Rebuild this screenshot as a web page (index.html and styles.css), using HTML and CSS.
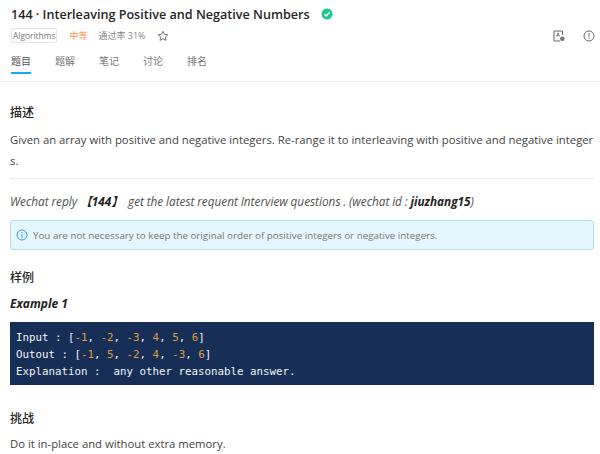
FILE: index.html
```html
<!DOCTYPE html>
<html lang="zh">
<head>
    <meta charset="UTF-8">
    <meta name="viewport" content="width=device-width, initial-scale=1.0">
    <title>144 · Interleaving Positive and Negative Numbers</title>
    <link rel="stylesheet" href="styles.css">
</head>
<body>

    <header class="head">
        <div class="title-row">
            <h1>144 · Interleaving Positive and Negative Numbers</h1>
            <svg class="done" width="12" height="12" viewBox="0 0 12 12">
                <circle cx="6" cy="6" r="5.5" fill="#1fc98b"/>
                <path d="M3.4 6.1 5.3 8 8.6 4.4" fill="none" stroke="#fff" stroke-width="1.4"/>
            </svg>
        </div>
        <div class="meta-row">
            <span class="tag">Algorithms</span>
            <span class="level">中等</span>
            <span class="rate">通过率 31%</span>
            <svg class="star" width="12" height="12" viewBox="0 0 12 12">
                <path d="M6 1.2 7.4 4.3 10.8 4.7 8.3 7 9 10.4 6 8.7 3 10.4 3.7 7 1.2 4.7 4.6 4.3Z" fill="none" stroke="#777" stroke-width="1"/>
            </svg>
            <div class="tools">
                <svg width="12" height="12" viewBox="0 0 12 12">
                    <path d="M9.5 5V1H1v10h6" fill="none" stroke="#666" stroke-width="1"/>
                    <path d="M3.4 6.5 5 2.8 6.6 6.5M4 5.4h2" fill="none" stroke="#666" stroke-width=".8"/>
                    <circle cx="9.3" cy="8.8" r="2.3" fill="#777"/>
                </svg>
                <svg width="12" height="12" viewBox="0 0 12 12">
                    <circle cx="6" cy="6" r="5" fill="none" stroke="#666" stroke-width="1"/>
                    <path d="M6 3v3.6M6 7.8v1.2" fill="none" stroke="#666" stroke-width="1"/>
                </svg>
            </div>
        </div>
        <nav class="tabs">
            <a class="tab active">题目</a>
            <a class="tab">题解</a>
            <a class="tab">笔记</a>
            <a class="tab">讨论</a>
            <a class="tab">排名</a>
        </nav>
    </header>

    <main class="content">
        <h2 class="sec first">描述</h2>
        <p class="desc">Given an array with positive and negative integers. Re-range it to interleaving with positive and negative integer<br>s.</p>
        <hr class="line">
        <p class="wechat">Wechat reply <b class="num">【144】</b>get the latest requent Interview questions . (wechat id : <b>jiuzhang15</b>)</p>
        <div class="notice">
            <svg width="12" height="12" viewBox="0 0 12 12">
                <circle cx="6" cy="6" r="5" fill="none" stroke="#2b9cf0" stroke-width="1"/>
                <path d="M6 5.2v3.6M6 3v1.2" fill="none" stroke="#2b9cf0" stroke-width="1"/>
            </svg>
            <span>You are not necessary to keep the original order of positive integers or negative integers.</span>
        </div>
        <h2 class="sec">样例</h2>
        <p class="example"><b>Example 1</b></p>
        <div class="code">
            <div class="code-line">Input : [<i>-1</i>, <i>-2</i>, <i>-3</i>, <i>4</i>, <i>5</i>, <i>6</i>]</div>
            <div class="code-line">Outout : [<i>-1</i>, <i>5</i>, <i>-2</i>, <i>4</i>, <i>-3</i>, <i>6</i>]</div>
            <div class="code-line">Explanation :  any other reasonable answer.</div>
        </div>
        <h2 class="sec">挑战</h2>
        <p class="desc">Do it in-place and without extra memory.</p>
    </main>

</body>
</html>
```

FILE: styles.css
```css
body {
    margin: 0;
    height: 454px;
    overflow: hidden;
    background: #fff;
    color: #444;
    font-family: 'Open Sans', 'Noto Sans CJK SC', sans-serif;
}

.head {
    padding: 0 5px 0 11px;
    border-bottom: 1px solid #eee;
    height: 81px;
}

.title-row {
    display: flex;
    align-items: center;
    gap: 11px;
    height: 28px;
}

h1 {
    margin: 0;
    font-size: 12.6px;
    font-weight: 600;
    color: #262626;
}

.meta-row {
    display: flex;
    align-items: center;
    height: 15px;
    font-size: 9px;
}

.tag {
    border: 1px solid #e4e4e4;
    border-radius: 2px;
    padding: 0 1px;
    color: #777;
    font-size: 8.4px;
    line-height: 13px;
}

.level {
    margin-left: 12px;
    color: #ff8f4d;
}

.rate {
    margin-left: 11px;
    color: #888;
}

.star {
    margin-left: 11px;
}

.tools {
    margin-left: auto;
    display: flex;
    gap: 18px;
}

.tabs {
    display: flex;
    gap: 24px;
    margin-top: 11px;
}

.tab {
    font-size: 10px;
    line-height: 14px;
    color: #777;
    padding-bottom: 4px;
    border-bottom: 2px solid transparent;
}

.tab.active {
    color: #555;
    border-bottom-color: #13a8f0;
}

.content {
    padding: 0 6px 0 10px;
}

.sec {
    margin: 0;
    font-size: 12px;
    font-weight: 500;
    line-height: 16px;
    color: #262626;
}

.sec.first {
    margin-top: 23px;
}

.desc {
    margin: 8px 0 0;
    font-size: 11.3px;
    line-height: 21px;
    color: #444;
}

.line {
    border: 0;
    border-top: 1px solid #eee;
    margin: 7px 0 0;
}

.wechat {
    margin: 14px 0 0;
    font-size: 11.8px;
    word-spacing: -0.3px;
    line-height: 17px;
    font-style: italic;
    color: #505050;
}

.wechat b {
    color: #222;
}

.wechat .num {
    margin-right: 5px;
}

.notice {
    display: flex;
    align-items: center;
    gap: 5px;
    margin-top: 10px;
    height: 28px;
    padding-left: 5px;
    background: #e6f6fe;
    border: 1px solid #a9defa;
    border-radius: 3px;
    font-size: 9.8px;
    color: #777;
}

.example {
    margin: 9px 0 0;
    font-size: 12px;
    line-height: 17px;
    font-style: italic;
    color: #222;
}

.notice + .sec {
    margin-top: 20px;
}

.code {
    margin: 10px 0 0;
    padding: 7px 6px 5px;
    background: #172f56;
    color: #f2f2f2;
    font-family: 'DejaVu Sans Mono', monospace;
    font-size: 10.8px;
    line-height: 17px;
    height: 51px;
}

.code-line {
    white-space: pre;
}

.code i {
    font-style: normal;
    color: #e29a3c;
}

.code + .sec {
    margin-top: 26px;
}

.code + .sec + .desc {
    margin-top: 6px;
}
```
